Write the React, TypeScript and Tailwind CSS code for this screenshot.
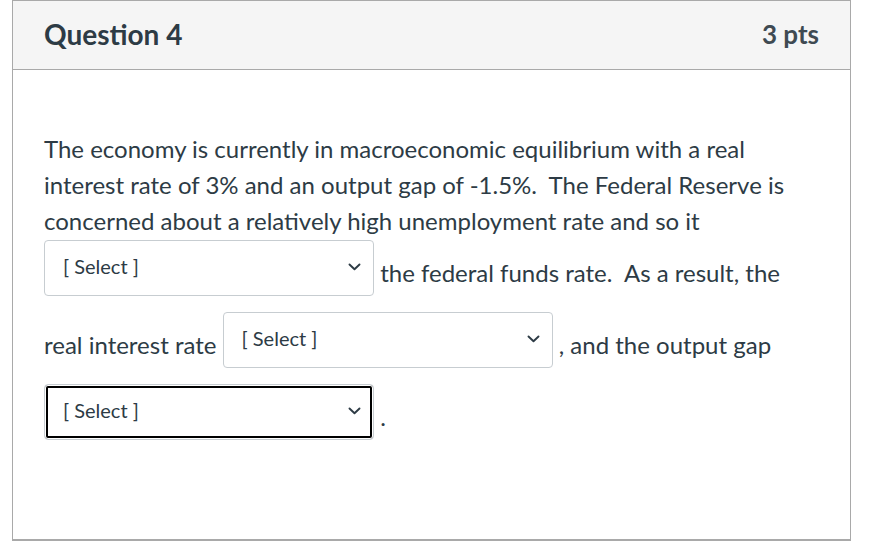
import React from 'react';

function Chevron() {
  return (
    <svg width="13" height="8" viewBox="0 0 13 8" fill="none" className="shrink-0">
      <path d="M1.5 1.5 L6.5 6.2 L11.5 1.5" stroke="#2d3b45" strokeWidth="1.9" strokeLinecap="round" strokeLinejoin="round" />
    </svg>
  );
}

function FakeSelect({ focused = false }: { focused?: boolean }) {
  return (
    <span
      className={
        'inline-flex items-center justify-between w-[330px] h-[56px] pl-[18px] pr-[12px] pb-[2px] mb-[15px] mt-[1px] border border-[#c7cdd1] rounded-[4px] bg-white text-[20px] leading-none align-[8px] ' +
        (focused ? 'shadow-[inset_0_0_0_1px_#ffffff,inset_0_0_0_3px_#000000]' : '')
      }
    >
      <span className="pb-[2px]">[ Select ]</span>
      <Chevron />
    </span>
  );
}

export default function App() {
  return (
    <div className="min-h-screen bg-white pl-[12px] text-[#2d3b45]" style={{ fontFamily: 'Lato, "Noto Sans", sans-serif' }}>
      <div className="w-[839px] h-[541px] border border-b-2 border-[#a9a9a9] flex flex-col">
        <div className="h-[69px] bg-[#f5f5f5] border-b border-[#a9a9a9] flex items-center justify-between pl-[31px] pr-[31px] pb-[2px] shrink-0">
          <h2 className="text-[28px] font-bold">Question 4</h2>
          <span className="text-[26px] font-bold text-[#3f4a52]">3 pts</span>
        </div>
        <div className="pl-[31px] pr-[45px] pt-[61px]">
          <p className="text-[24px] leading-[36px]">
            The economy is currently in macroeconomic equilibrium with a real interest rate of 3% and an output gap of -1.5%.&nbsp; The Federal Reserve is concerned about a relatively high unemployment rate and so it{' '}
            <FakeSelect /> the federal funds rate.&nbsp; As a result, the real interest rate <FakeSelect />&nbsp;, and the output gap <FakeSelect focused />&nbsp;.
          </p>
        </div>
      </div>
    </div>
  );
}
